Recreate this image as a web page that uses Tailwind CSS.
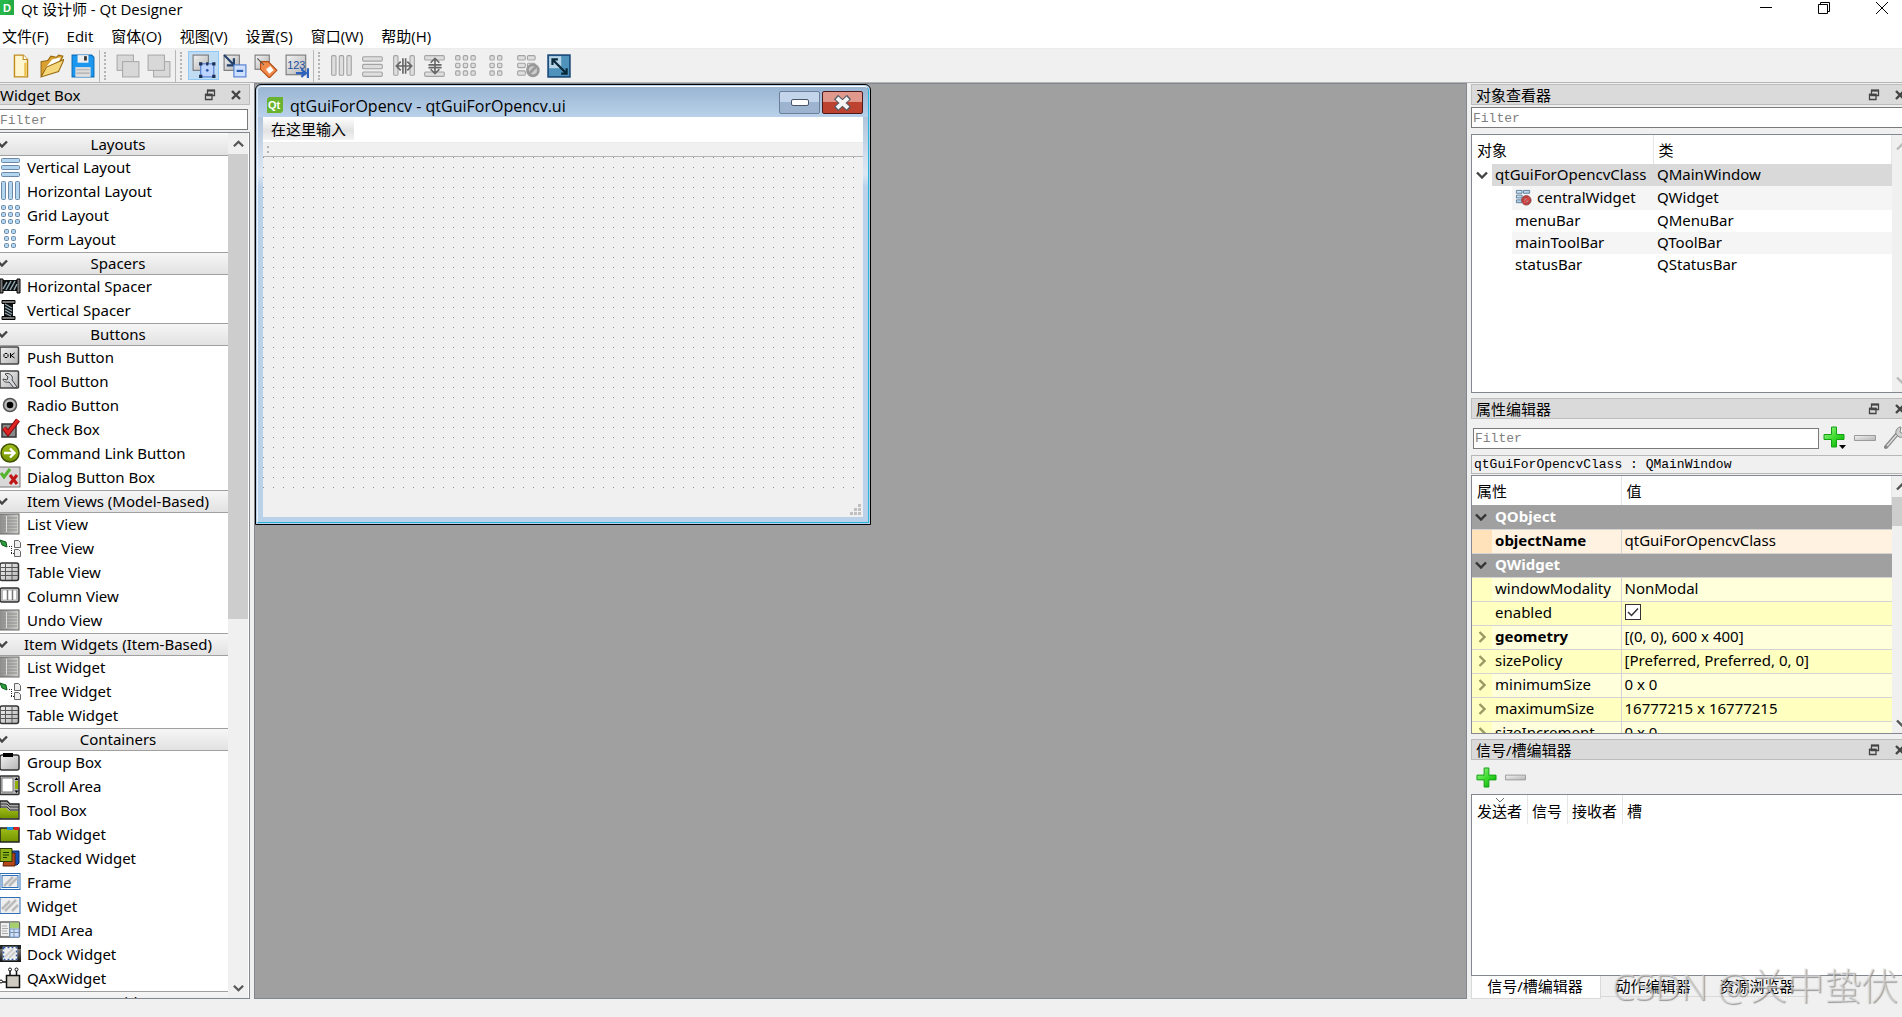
<!DOCTYPE html>
<html lang="zh">
<head>
<meta charset="utf-8">
<title>Qt 设计师 - Qt Designer</title>
<script src="https://cdn.jsdelivr.net/npm/@tailwindcss/browser@4"></script>
</head>
<body class="relative h-screen overflow-hidden flex flex-col bg-[#f0f0f0] text-black text-base leading-5 font-['Noto_Sans','Noto_Sans_CJK_SC',sans-serif]">

<svg class="absolute w-0 h-0">
  <defs>
    <linearGradient id="blue" x1="0" y1="0" x2="1" y2="1"><stop offset="0" stop-color="#d5ecfb"/><stop offset="1" stop-color="#8fb9dc"/></linearGradient>
    <linearGradient id="grey" x1="0" y1="0" x2="1" y2="1"><stop offset="0" stop-color="#f2f2f2"/><stop offset="1" stop-color="#b4b4b4"/></linearGradient>
    <linearGradient id="steel" x1="0" y1="0" x2="1" y2="0"><stop offset="0" stop-color="#8a8a8a"/><stop offset="1" stop-color="#cfcfcb"/></linearGradient>
    <linearGradient id="green" x1="0" y1="0" x2="1" y2="1"><stop offset="0" stop-color="#a6f59a"/><stop offset=".5" stop-color="#3fdc30"/><stop offset="1" stop-color="#00a800"/></linearGradient>
    <linearGradient id="olive" x1="0" y1="0" x2="0" y2="1"><stop offset="0" stop-color="#9fbd1a"/><stop offset="1" stop-color="#739300"/></linearGradient>
    <linearGradient id="dark" x1="0" y1="0" x2="0" y2="1"><stop offset="0" stop-color="#999"/><stop offset="1" stop-color="#111"/></linearGradient>
    <symbol id="chev" viewBox="0 0 12 8"><path d="M1 1.5l5 5 5-5" fill="none" stroke="currentColor" stroke-width="2.4"/></symbol>
    <symbol id="float" viewBox="0 0 12 12"><path d="M3.5 1.5h7v5h-7zM1.500 5.500h6.500v5h-6.500z" fill="#dadada" stroke="#444" stroke-width="1.300"/><path d="M3 1.500h8M1 5.700h7.500" stroke="#444" stroke-width="2"/></symbol>
    <symbol id="close" viewBox="0 0 12 12"><path d="M2 2l8 8M10 2l-8 8" stroke="#444" stroke-width="2.400"/></symbol>
    <symbol id="plus" viewBox="0 0 22 22"><path d="M8.500 1h5v7.500h7.500v5h-7.500v7.500h-5v-7.500h-7.500v-5h7.500z" fill="url(#green)" stroke="#12a112"/></symbol>
    <symbol id="minus" viewBox="0 0 22 22"><path d="M.5 8.500h21v5h-21z" fill="url(#grey)" stroke="#9a9a9a"/></symbol>
    <symbol id="nolayout" viewBox="0 0 18 18"><g fill="url(#blue)" stroke="#5f7d98"><path d="M1.500 1.500h6v3h-6zM9 1.500h6.500v3h-6.500zM1.500 6.500h6v3h-6zM1.500 11.500h6v3h-6z"/></g><circle cx="12" cy="12" r="5" fill="#c33a3a" stroke="#8e5050"/><circle cx="12" cy="12" r="2.500" fill="#a88" /><path d="M9 15l6-6" stroke="#d44" stroke-width="2"/></symbol>
  </defs>
</svg>

<header class="bg-white shrink-0 h-[49px] border-b border-[#ececec] font-['Open_Sans','Noto_Sans_CJK_SC',sans-serif] text-[15px]">
  <div class="flex items-start h-[26px] gap-[18px]">
    <h1 class="leading-[18px] grow flex gap-[7px]"><svg class="w-[14px] h-[15px]" viewBox="0 0 14 15"><path d="M0 0h14v15h-14z" fill="#28b84a"/><path d="M9 0h5v15h-9z" fill="#1f9d3f" opacity=".5"/><text x="3" y="12" font-size="11" font-weight="bold" fill="#fff" font-family="Liberation Sans">D</text></svg>Qt 设计师 - Qt Designer</h1>
    <button aria-label="Minimize" class="w-10 h-4 flex justify-center items-center"><svg class="w-3 h-3" viewBox="0 0 12 12"><path d="M0 5.500h12" stroke="#000"/></svg></button>
    <button aria-label="Restore" class="w-10 h-4 flex justify-center items-center"><svg class="w-3 h-3" viewBox="0 0 12 12"><path d="M.5 2.500h9v9h-9zM2.500 2.500v-2h9v9h-2" fill="none" stroke="#000"/></svg></button>
    <button aria-label="Close" class="w-10 h-4 flex justify-center items-center"><svg class="w-3 h-3" viewBox="0 0 12 12"><path d="M0 0l12 12M12 0l-12 12" stroke="#000"/></svg></button>
  </div>
  <nav class="flex gap-[18px] pl-0.5 leading-5">
    <a href="#">文件(F)</a><a href="#">Edit</a><a href="#">窗体(O)</a><a href="#">视图(V)</a><a href="#">设置(S)</a><a href="#">窗口(W)</a><a href="#">帮助(H)</a>
  </nav>
</header>

<div id="toolbar" class="shrink-0 h-[34px] flex items-center border-b border-[#b4b4b4] pl-[5px]"></div>

<main class="grow min-h-0 flex">

  <aside class="w-[250px] shrink-0 flex flex-col pt-px">
    <div class="h-[21px] shrink-0 flex items-center bg-[#dadada] border border-l-0 border-[#bcbcbc]">
      <h2 class="grow text-[15px]">Widget Box</h2>
      <button aria-label="Float" class="mr-[14px]"><svg class="w-3 h-3"><use href="#float"/></svg></button>
      <button aria-label="Close" class="mr-[7px]"><svg class="w-3 h-3"><use href="#close"/></svg></button>
    </div>
    <input aria-label="Filter widgets" placeholder="Filter" class="mt-1 mr-0.5 h-[21px] pt-0.5 shrink-0 border border-l-0 border-[#7a7a7a] bg-white text-[13px] font-['Liberation_Mono',monospace] placeholder:text-[#808080]">
    <div class="mt-0.5 grow min-h-0 flex border border-l-0 border-[#828790] bg-white">
      <div id="widgets" class="grow overflow-hidden"></div>
      <div class="w-5 shrink-0 bg-[#f0f0f0] flex flex-col items-center text-[#555] mr-px">
        <div class="h-[21px] shrink-0 flex items-center"><svg class="w-[11px] h-2 rotate-180"><use href="#chev"/></svg></div>
        <div class="w-full bg-[#cdcdcd] basis-[465px]"></div>
        <div class="grow"></div>
        <div class="h-[21px] shrink-0 flex items-center"><svg class="w-[11px] h-2"><use href="#chev"/></svg></div>
      </div>
    </div>
  </aside>

  <section class="grow ml-1 border border-[#828790] bg-[#a0a0a0] overflow-hidden">
    <div class="w-[616px] h-[441px] rounded-t-md border border-black bg-[#bad1ea] p-px">
      <div class="h-full flex flex-col rounded-t-[5px] border border-t-white border-l-white/70 border-r-[#2bb4d6] border-b-[#2bb4d6] px-[5px] pb-[5px] bg-linear-to-b from-[#9ab3d0] from-0% via-[#dde8f4] via-20% to-[#bad1ea] to-23%">
        <div class="-mx-[5px] px-[5px] h-[30px] shrink-0 flex bg-linear-to-b from-[#9ab5d2] to-[#b9d1ea] rounded-t">
          <svg class="w-4 h-4 mt-[10px] ml-1 mr-[7px]" viewBox="0 0 16 16"><path d="M2 0h14v14l-2 2h-14v-14z" fill="#6ab32e"/><text x="1" y="12" font-size="11" font-weight="bold" fill="#fff" font-family="Liberation Sans">Qt</text></svg>
          <h2 class="grow mt-[9px] font-['Open_Sans',sans-serif] text-base leading-5">qtGuiForOpencv - qtGuiForOpencv.ui</h2>
          <button aria-label="Minimize form" class="mt-1 w-[41px] h-[23px] mr-0.5 border border-[#6b7f9b] rounded-xs bg-linear-to-b from-[#c3d5ea] from-50% to-[#9db4d0] to-50% flex justify-center items-center"><span class="w-[18px] h-[7px] border border-[#4a5568] rounded-xs bg-white"></span></button>
          <button aria-label="Close form" class="mt-1 w-[41px] h-[23px] border border-[#4d1a1a] rounded-xs bg-linear-to-b from-[#e0998c] from-45% to-[#bd4330] to-50% flex justify-center items-center"><svg class="w-[19px] h-4" viewBox="0 0 19 16"><path d="M3 2l13 12M16 2l-13 12" stroke="#555a66" stroke-width="6"/><path d="M4 3l11 10M15 3l-11 10" stroke="#f6f6f6" stroke-width="4"/></svg></button>
        </div>
        <div class="h-[26px] shrink-0 bg-white border-b border-[#ececec] flex items-start"><button class="h-[23px] px-2 text-[15px] bg-linear-to-b from-white via-[#e2e2e2] via-60% to-[#f4f4f4]">在这里输入</button></div>
        <div class="h-[14px] shrink-0 bg-[#f0f0f0] border-b border-[#b4b4b4] flex items-center pl-1"><span class="w-0.5 h-[7px] border-y-2 border-[#b4b4b4]"></span></div>
        <div class="h-[332px] shrink-0 bg-[#f0f0f0] flex pr-[6px]"><div id="dots" class="grow"></div></div>
        <div class="grow bg-[#f0f0f0] flex justify-end items-end p-0.5"><svg class="w-[11px] h-[11px]" viewBox="0 0 11 11"><path d="M8 0h3v3h-3zM4 4h3v3h-3zM8 4h3v3h-3zM0 8h3v3h-3zM4 8h3v3h-3zM8 8h3v3h-3z" fill="#c0c0c0"/></svg></div>
      </div>
    </div>
  </section>

  <aside class="ml-1 w-[431px] shrink-0 overflow-hidden flex flex-col pt-px">
    <div class="grow w-[441px] flex flex-col gap-[5px] text-[15px]">

      <section class="flex-[309] min-h-0 flex flex-col">
        <div class="h-[21px] shrink-0 flex items-center bg-[#dadada] border border-[#bcbcbc] pl-1">
          <h2 class="grow">对象查看器</h2>
          <button aria-label="Float" class="mr-[14px]"><svg class="w-3 h-3"><use href="#float"/></svg></button>
          <button aria-label="Close" class="mr-[5px]"><svg class="w-3 h-3"><use href="#close"/></svg></button>
        </div>
        <input aria-label="Filter objects" placeholder="Filter" class="mt-0.5 h-[21px] pt-0.5 shrink-0 px-px border border-[#7a7a7a] bg-white text-[13px] font-['Liberation_Mono',monospace] placeholder:text-[#808080]">
        <div class="mt-[6px] grow min-h-0 flex border border-[#828790] bg-white">
          <div class="grow">
            <table class="w-full table-fixed border-collapse text-left">
              <colgroup><col class="w-5"><col class="w-[161px]"><col></colgroup>
              <thead><tr class="h-[29px]"><th colspan="2" class="font-normal pl-[5px] border-r border-[#e5e5e5]">对象</th><th class="font-normal pl-[5px] border-r border-[#e5e5e5]">类</th></tr></thead>
              <tbody>
                <tr class="h-[22px]"><td class="pl-1"><svg class="w-3 h-2 text-[#444]"><use href="#chev"/></svg></td><td class="bg-[#d9d9d9] pl-[3px] pb-0.5">qtGuiForOpencvClass</td><td class="bg-[#d9d9d9] pl-1 pb-0.5">QMainWindow</td></tr>
                <tr class="h-6"><td></td><td class="pl-5"><span class="flex h-6 items-center bg-[#f5f5f5] pl-[3px] pb-0.5"><svg class="w-[17px] h-[17px] mr-[5px]"><use href="#nolayout"/></svg>centralWidget</span></td><td class="bg-[#f5f5f5] pl-1 pb-0.5">QWidget</td></tr>
                <tr class="h-[22px]"><td></td><td class="pl-[23px] pb-0.5">menuBar</td><td class="pl-1 pb-0.5">QMenuBar</td></tr>
                <tr class="h-[22px]"><td></td><td class="pl-5"><span class="flex h-[22px] items-center bg-[#f5f5f5] pl-[3px] pb-0.5">mainToolBar</span></td><td class="bg-[#f5f5f5] pl-1 pb-0.5">QToolBar</td></tr>
                <tr class="h-[22px]"><td></td><td class="pl-[23px] pb-0.5">statusBar</td><td class="pl-1 pb-0.5">QStatusBar</td></tr>
              </tbody>
            </table>
          </div>
          <div class="w-[19px] shrink-0 bg-[#f0f0f0] flex flex-col justify-between items-center py-2 text-[#bbb]"><svg class="w-3 h-2 rotate-180"><use href="#chev"/></svg><svg class="w-3 h-2"><use href="#chev"/></svg></div>
        </div>
      </section>

      <section class="flex-[336] min-h-0 flex flex-col">
        <div class="h-[21px] shrink-0 flex items-center bg-[#dadada] border border-[#bcbcbc] pl-1">
          <h2 class="grow">属性编辑器</h2>
          <button aria-label="Float" class="mr-[14px]"><svg class="w-3 h-3"><use href="#float"/></svg></button>
          <button aria-label="Close" class="mr-[5px]"><svg class="w-3 h-3"><use href="#close"/></svg></button>
        </div>
        <div class="h-9 shrink-0 flex items-center pl-0.5 pt-0.5">
          <input aria-label="Filter properties" placeholder="Filter" class="w-[346px] h-[21px] px-px border border-[#7a7a7a] bg-white text-[13px] font-['Liberation_Mono',monospace] placeholder:text-[#808080]">
          <button aria-label="Add property" class="ml-1 flex items-end"><svg class="w-6 h-6" viewBox="0 0 24 24"><use href="#plus" width="22" height="22"/><path d="M16 19h7l-3.500 4z" fill="#000"/></svg></button>
          <button aria-label="Remove property" class="ml-[7px]"><svg class="w-[22px] h-[22px]"><use href="#minus"/></svg></button>
          <button aria-label="Configure" class="ml-2"><svg class="w-6 h-6" viewBox="0 0 24 24"><path d="M2 21l12-14" stroke="#888" stroke-width="4" stroke-linecap="round"/><path d="M3 20l12-14" stroke="#ddd" stroke-width="1.500"/><path d="M12 8c-1-4 2-7 5-7l-1 5 3 2 4-2c0 4-5 6-8 5z" fill="#d0d0d0" stroke="#888"/></svg></button>
        </div>
        <div class="h-[19px] shrink-0 border border-[#b8b8b8] pl-0.5 leading-[18px] text-[13px] font-['Liberation_Mono',monospace]">qtGuiForOpencvClass : QMainWindow</div>
        <div class="mt-px grow min-h-0 flex border border-[#828790] bg-white">
          <div class="grow overflow-hidden">
            <table class="w-full table-fixed border-collapse text-left">
              <colgroup><col class="w-5"><col class="w-[129px]"><col></colgroup>
              <thead><tr class="h-[29px]"><th colspan="2" class="font-normal pl-[5px] border-r border-[#e5e5e5]">属性</th><th class="font-normal pl-[5px] border-r border-[#e5e5e5]">值</th></tr></thead>
              <tbody id="props"></tbody>
            </table>
          </div>
          <div class="w-[19px] shrink-0 bg-[#f0f0f0] flex flex-col items-center text-[#555]">
            <div class="h-[21px] flex items-center shrink-0"><svg class="w-3 h-2 rotate-180"><use href="#chev"/></svg></div>
            <div class="w-full h-[29px] bg-[#cdcdcd] shrink-0"></div><div class="grow"></div>
            <div class="h-[21px] flex items-center shrink-0"><svg class="w-3 h-2"><use href="#chev"/></svg></div>
          </div>
        </div>
      </section>

      <section class="flex-[260] min-h-0 flex flex-col">
        <div class="h-[21px] shrink-0 flex items-center bg-[#dadada] border border-[#bcbcbc] pl-1">
          <h2 class="grow">信号/槽编辑器</h2>
          <button aria-label="Float" class="mr-[14px]"><svg class="w-3 h-3"><use href="#float"/></svg></button>
          <button aria-label="Close" class="mr-[5px]"><svg class="w-3 h-3"><use href="#close"/></svg></button>
        </div>
        <div class="h-[34px] shrink-0 flex items-center gap-2 pl-[5px]">
          <button aria-label="Add connection"><svg class="w-[21px] h-[21px]"><use href="#plus"/></svg></button>
          <button aria-label="Remove connection"><svg class="w-[21px] h-[21px]"><use href="#minus"/></svg></button>
        </div>
        <div class="grow min-h-0 border border-[#828790] bg-white">
          <table class="text-left border-collapse"><thead><tr class="h-[29px]">
            <th class="relative font-normal px-[5px] pt-0.5 border-r border-[#e5e5e5] whitespace-nowrap">发送者<svg class="absolute left-6 top-[3px] w-2 h-1" viewBox="0 0 8 4"><path d="M0 0l4 4 4-4" fill="none" stroke="#666"/></svg></th>
            <th class="font-normal pl-1 pr-[5px] pt-0.5 border-r border-[#e5e5e5] whitespace-nowrap">信号</th>
            <th class="font-normal pl-1 pr-[5px] pt-0.5 border-r border-[#e5e5e5] whitespace-nowrap">接收者</th>
            <th class="font-normal px-1 pt-0.5">槽</th></tr></thead></table>
        </div>
        <div class="h-[23px] shrink-0 flex items-start">
          <button class="h-[23px] w-[130px] pb-1 pr-0.5 bg-white border border-t-0 border-[#d9d9d9]">信号/槽编辑器</button>
          <button class="h-[21px] w-[104px] pb-0.5 border-b border-[#d9d9d9]">动作编辑器</button>
          <button class="h-[21px] w-[104px] pb-0.5 border-b border-[#d9d9d9]">资源浏览器</button>
        </div>
      </section>
    </div>
  </aside>
</main>
<footer class="h-[18px] shrink-0"></footer>

<div class="absolute right-1 bottom-1 text-[37px] leading-[54px] font-light font-['Open_Sans','Noto_Sans_CJK_SC',sans-serif] text-[#e4e4e4]/60 [text-shadow:1px_1px_1px_#777b] pointer-events-none whitespace-nowrap">CSDN @关中蛰伏</div>

<script>
const svg = (body, w = 22, h = 22) => `<svg class="shrink-0" width="${w}" height="${h}" viewBox="0 0 22 22">${body}</svg>`;
const cells = (xs, ys, w, h, fill, stroke) => xs.map(x => ys.map(y => `<rect x="${x}" y="${y}" width="${w}" height="${h}" rx="1" fill="${fill}" stroke="${stroke}"/>`).join('')).join('');
const layouts = (fill, stroke) => ({
  v: cells([1.5], [2.5, 9.5, 16.5], 18, 4, fill, stroke),
  h: cells([1.5, 8.5, 15.5], [1.5], 4, 18, fill, stroke),
  g: cells([1.5, 8.5, 15.5], [1.5, 8.5, 15.5], 4, 4, fill, stroke),
  f: cells([4.5, 11.5], [1.5, 8.5, 15.5], 4, 4, fill, stroke)
});
const B = layouts('#b3d6f0', '#6c88a6'), G = layouts('#dedede', '#a3a3a3');

const list = '<rect x="-1" y="1" width="20" height="20" fill="url(#steel)" stroke="#666"/><path d="M3 5h14M3 8h14M3 11h14M3 14h14M3 17h14" stroke="#8d8d8d"/><path d="M6.500 3v16" stroke="#ddd"/>';
const tree = '<path d="M0 3l6 2 1 5-5-2z" fill="#2c9c3c" stroke="#145a20"/><path d="M9 9.500h4M11.500 9v8M11 16.500h4" stroke="#222" stroke-dasharray="1 1"/><path d="M14.500 3.500h4l2 2v5h-6zM14.500 12.500h4l2 2v5h-6z" fill="#eee" stroke="#666"/>';
const table = '<rect x="0" y="2" width="18.500" height="17.500" rx="2" fill="url(#grey)" stroke="#333" stroke-width="1.500"/><path d="M1 6.500h17M1 10.500h17M1 14.500h17M5.500 3v16M12 3v16" stroke="#555"/>';
const icons = {
  hs: '<path d="M3 5h14v11h-14z" fill="#111"/><path d="M0 4h3v14h-3zM17 4h3v14h-3z" fill="#777" stroke="#000"/><path d="M3 14l4-7M6 15l5-9M10 15l5-9M14 15l3-6" stroke="#8fa9b5" stroke-width="1.500"/>',
  vs: '<path d="M4 4h9v14h-9z" fill="#111"/><path d="M2 1.500h13v3h-13zM2 17.500h13v3h-13z" fill="#777" stroke="#000"/><path d="M5 5l7 4M5 8l7 4M5 11l7 4M5 14l6 3" stroke="#8fa9b5" stroke-width="1.300"/>',
  push: '<rect x="0" y="1" width="18.500" height="17" rx="1" fill="url(#grey)" stroke="#444" stroke-width="1.500"/><path d="M5 7.500h2l1 1v2l-1 1h-2l-1-1v-2zM10.500 7v5M14.500 7l-3.500 2.500 3.500 2.500" fill="none" stroke="#000"/>',
  tool: '<rect x="0" y="1" width="18.500" height="17" rx="1" fill="url(#grey)" stroke="#444" stroke-width="1.500"/><path d="M5 4c4-2 9 2 7 6l5 7-3 1-5-6c-4 1-6-1-6-3l4 1 1-3z" fill="#d4d8dc" stroke="#444"/>',
  radio: '<circle cx="10" cy="11" r="6.500" fill="#bbb" stroke="#555" stroke-width="1.500"/><circle cx="10" cy="11" r="3.300" fill="#000"/>',
  check: '<rect x="2" y="6" width="14" height="13" fill="#888" stroke="#333" stroke-width="1.500"/><path d="M4 10l4 5 10-13" fill="none" stroke="#7d0d0d" stroke-width="5"/><path d="M4 10l4 5 10-13" fill="none" stroke="#e02424" stroke-width="3"/>',
  cmd: '<circle cx="10" cy="11" r="9" fill="url(#olive)" stroke="#3f5200" stroke-width="1.500"/><path d="M4 11h10M10 6.500l4.500 4.500-4.500 4.500" fill="none" stroke="#fff" stroke-width="2.400"/>',
  dlg: '<rect x="-1" y="1" width="21" height="20" fill="#d9d9d9" stroke="#777"/><path d="M1 7l3 4 6-8" fill="none" stroke="#55b32e" stroke-width="3"/><path d="M10 9l7 9M17 9l-7 9" stroke="#c01616" stroke-width="3"/>',
  col: '<rect x="0" y="3" width="19" height="14" rx="2" fill="#bbb" stroke="#333" stroke-width="1.500"/><path d="M3 5.500h13v9h-13z" fill="#fff"/><path d="M7.500 5v10M12.500 5v10" stroke="#777" stroke-width="1.500"/>',
  group: '<rect x="0" y="4" width="19" height="15" rx="2" fill="url(#grey)" stroke="#333" stroke-width="1.500"/><path d="M3 2h10v4h-10z" fill="#000"/>',
  scroll: '<rect x="0" y="1" width="19" height="18.500" rx="1" fill="#bbb" stroke="#333" stroke-width="1.500"/><path d="M2 3h11v14h-11z" fill="#fff" stroke="#777"/><path d="M15 6h3v8h-3z" fill="#8fb300"/><path d="M14.500 5h4l-2-2.500zM14.500 15.500h4l-2 2.500z" fill="#000"/>',
  tbox: '<path d="M0 2h7l3 3h9v15h-19z" fill="#aaa" stroke="#222" stroke-width="1.300"/><path d="M0 5h7l3 3h9M0 8h7l3 3h9" fill="none" stroke="#333"/><path d="M0 9h6l3 3h9v7h-18z" fill="url(#olive)"/>',
  tab: '<path d="M0 5h19v14h-19z" fill="url(#olive)" stroke="#222" stroke-width="1.500"/><path d="M7 4h6v3h-6z" fill="#1d90e0"/><path d="M14 4h5v3h-5z" fill="#d22"/>',
  stack: '<path d="M11 4h8v12l-2 2h-6z" fill="#1450b4" stroke="#0b2a60"/><path d="M5 6h10v13h-12z" fill="#b5471b" stroke="#5d1f08"/><path d="M0 1.500h12v13h-12z" fill="#8fb016" stroke="#2c3a00"/><path d="M3 5.500h6M3 8h6M3 10.500h4" stroke="#143c00"/>',
  frame: '<rect x="0" y="2.500" width="20" height="16" fill="#fff" stroke="#2f6fb8"/><rect x="2" y="4.500" width="16" height="12" fill="#eee" stroke="#2f6fb8"/><path d="M4 15l9-9M9 15l8-8" stroke="#bbb" stroke-width="2.500"/>',
  widget: '<rect x="0" y="2.500" width="20" height="16" fill="#eee" stroke="#2f6fb8"/><path d="M2 14l8-8M5 16l11-11M12 16l6-6" stroke="#bbb" stroke-width="2.500"/>',
  mdi: '<rect x="0" y="3" width="19.500" height="15" rx="1" fill="#eee" stroke="#666" stroke-width="1.300"/><path d="M10 3.500h9v6h-9z" fill="#a8cf6f"/><path d="M10 10h9v8h-9z" fill="#cfe0ff" stroke="#7a9fd4"/><path d="M2 7h5M2 9.500h6M2 12h5M2 14.500h6" stroke="#aaa"/><path d="M9.500 3v15M10 13.500h9M14 10v8" stroke="#7a8fa4"/>',
  dock: '<path d="M0 2h21v17h-21z" fill="url(#dark)"/><path d="M0 2h21v4h-21z" fill="#222"/><rect x="3.500" y="4.500" width="13" height="12" fill="#eee" stroke="#fff" stroke-width="1.500"/><rect x="3.500" y="4.500" width="13" height="12" fill="none" stroke="#2f5fa8" stroke-width="1.500" stroke-dasharray="2 2"/><path d="M5 14l8-8M9 15l6-6" stroke="#ccc" stroke-width="2"/>',
  qax: '<path d="M6.500 8.500h13v12h-13z" fill="#cfcbc2" stroke="#111" stroke-width="1.500"/><path d="M10 8v-4M16.500 8v-4M6 15h-4" stroke="#111" stroke-width="1.500"/><circle cx="10" cy="2.500" r="1.500" fill="#fff" stroke="#111"/><circle cx="16.500" cy="2.500" r="1.500" fill="#fff" stroke="#111"/><circle cx="1" cy="14.500" r="1.500" fill="#fff" stroke="#111"/>'
};
const groups = [
  ['Layouts', [['Vertical Layout', B.v], ['Horizontal Layout', B.h], ['Grid Layout', B.g], ['Form Layout', B.f]]],
  ['Spacers', [['Horizontal Spacer', icons.hs], ['Vertical Spacer', icons.vs]]],
  ['Buttons', [['Push Button', icons.push], ['Tool Button', icons.tool], ['Radio Button', icons.radio], ['Check Box', icons.check], ['Command Link Button', icons.cmd], ['Dialog Button Box', icons.dlg]]],
  ['Item Views (Model-Based)', [['List View', list], ['Tree View', tree], ['Table View', table], ['Column View', icons.col], ['Undo View', list]]],
  ['Item Widgets (Item-Based)', [['List Widget', list], ['Tree Widget', tree], ['Table Widget', table]]],
  ['Containers', [['Group Box', icons.group], ['Scroll Area', icons.scroll], ['Tool Box', icons.tbox], ['Tab Widget', icons.tab], ['Stacked Widget', icons.stack], ['Frame', icons.frame], ['Widget', icons.widget], ['MDI Area', icons.mdi], ['Dock Widget', icons.dock], ['QAxWidget', icons.qax]]],
  ['Input Widgets', []]
];
document.getElementById('widgets').innerHTML = groups.map(([name, rows]) => `
  <h3 class="relative h-[23px] pl-2 pb-0.5 flex items-center justify-center text-[15px] border-y border-[#a0a0a0] first:border-t-white bg-linear-to-b from-[#f6f6f6] to-[#e2e2e2]"><svg class="absolute -left-1 top-1.5 w-3 h-2 text-[#444]"><use href="#chev"/></svg>${name}</h3>
  <ul>${rows.map(([t, i]) => `<li class="h-6 pb-0.5 flex items-center gap-[5px] text-[15px]">${svg(i)}${t}</li>`).join('')}</ul>`).join('');

const sq = (x, y, s, f = 'url(#grey)') => `<rect x="${x}" y="${y}" width="${s}" height="${s}" fill="${f}" stroke="#777"/>`;
const gsq = (x, y) => `<rect x="${x}" y="${y}" width="15" height="14" fill="#d8d8d8" stroke="#aaa"/>`;
const tools = [
  ['New', '<path d="M5 1h8l4 4v16h-12z" fill="#fff6cf" stroke="#c08a1c" stroke-width="1.300"/><path d="M13 1v4h4" fill="#fff" stroke="#c08a1c"/><path d="M15 8v12" stroke="#eac04a" stroke-width="2"/>'],
  ['Open', '<path d="M1 20v-13l6-1 3-4 5 1 2-2 4 1-3 6z" fill="#d9a030" stroke="#9a6a12"/><path d="M4 14l7-9 8-2-2 5z" fill="#fff"/><path d="M1 21l5-9 16-7-5 11z" fill="#f5d77c" stroke="#9a6a12"/>'],
  ['Save', '<path d="M1 1h18l2 2v18h-20z" fill="#1c97f0" stroke="#0c6dba"/><path d="M6 1h10v7h-10z" fill="#eee"/><path d="M12 2h2.500v4h-2.500z" fill="#333"/><path d="M4 12h14v9h-14z" fill="#ddd"/><path d="M5 14.500h12M5 17.500h12" stroke="#aaa"/>'],
  '|',
  ['Send to back', gsq(1, 1) + gsq(6, 7)], ['Bring to front', gsq(6, 7) + gsq(1, 1)],
  '|',
  ['Edit widgets', sq(1, 1, 14) + '<rect x="8" y="9" width="12" height="12" fill="#bcd4ff" stroke="#4a7ad0"/><path d="M6.500 7.500h3v3h-3zM18.500 7.500h3v3h-3zM6.500 19h3v3h-3zM18.500 19h3v3h-3zM13 7.500h2v3h-2z" fill="#1c2f55"/><circle cx="14" cy="15" r="1.200" fill="#2255aa"/>', 1],
  ['Edit signals', sq(1, 1, 14) + '<path d="M1 1l9 9M10 4v6.500h-6.500" fill="none" stroke="#24406c" stroke-width="2"/><rect x="10" y="10" width="11" height="11" fill="#cfe0ff" stroke="#4a7ad0"/><path d="M12.500 15.500h6" stroke="#2b5db0" stroke-width="2"/>'],
  ['Edit buddies', sq(1, 1, 13) + '<path d="M6 7h7l8 8-7 7-8-8z" fill="#f08a4a" stroke="#b24a10"/><path d="M11 14l4-3 3 4-4 3z" fill="#fff"/><path d="M3 4l6 6" stroke="#555"/>'],
  ['Edit tab order', sq(1, 1, 18) + '<text x="2" y="14" font-size="10" fill="#1d4f9e" font-family="Liberation Sans">123</text><path d="M10 17.500h8M15 14l4 3.500-4 3.500M21 13v9" fill="none" stroke="#2b62c0" stroke-width="2"/>'],
  '|',
  ['Lay out horizontally', G.h], ['Lay out vertically', G.v],
  ['Splitter horizontally', cells([1.5, 16.5], [1.5], 4, 18, '#dedede', '#a3a3a3') + '<path d="M4 11h14M8 7l-4 4 4 4M14 7l4 4-4 4M10 4v14M12.500 4v14" fill="none" stroke="#666" stroke-width="1.500"/>'],
  ['Splitter vertically', cells([1.5], [1.5, 16.5], 18, 4, '#dedede', '#a3a3a3') + '<path d="M11 4v14M7 8l4-4 4 4M7 14l4 4 4-4M5 10h12M5 12.500h12" fill="none" stroke="#666" stroke-width="1.500"/>'],
  ['Lay out in a grid', G.g], ['Lay out in a form', G.f],
  ['Break layout', cells([1.5, 10.5], [1.5, 8.5], 7, 4, '#dedede', '#a3a3a3') + cells([1.5], [15.5], 7, 4, '#dedede', '#a3a3a3') + '<circle cx="15.500" cy="15" r="5" fill="#ccc" stroke="#999" stroke-width="2.500"/><path d="M12 18l7-7" stroke="#999" stroke-width="2.500"/>'],
  ['Adjust size', '<rect x="1" y="1" width="20" height="20" fill="#4f93bd" stroke="#1b4a78" stroke-width="1.500"/><rect x="2" y="2" width="11" height="11" fill="#b9d6e8"/><path d="M5 5l13 13M5 10v-5h5M18 13v5h-5" fill="none" stroke="#0a2a3c" stroke-width="2"/>']
];
document.getElementById('toolbar').innerHTML = tools.map(t => t === '|'
  ? '<span class="ml-px mr-1 w-px h-8 bg-[#b8b8b8]"></span><span class="w-0.5 mr-1.5 h-7 border-l-2 border-dotted border-[#b4b4b4]"></span>'
  : `<button aria-label="${t[0]}" class="${t[2] ? 'w-[31px] h-[29px] flex items-center justify-center bg-[#c0dcf3] border border-[#90c8f6]' : 'w-[31px] h-[29px] flex items-center justify-center'}">${svg(t[1], 24, 24)}</button>`).join('');

const chevRight = '<svg class="w-3 h-2 ml-1 -rotate-90 text-[#999966]"><use href="#chev"/></svg>';
const chevDown = '<svg class="w-3 h-2 ml-[3px] text-[#333]"><use href="#chev"/></svg>';
const light = 'bg-[#ffffdc]', deep = 'bg-[#ffffbf]';
const props = [
  ['objectName', 'qtGuiForOpencvClass', 'bg-[#fff2e0]', 'bg-[#ffe2b9]', '', 1],
  null,
  ['windowModality', 'NonModal', light, deep, ''],
  ['enabled', '<span class="relative block w-4 h-4"><input type="checkbox" checked aria-label="enabled" class="block w-4 h-4 appearance-none bg-white border border-[#333]"><svg class="absolute inset-0 w-4 h-4 pointer-events-none" viewBox="0 0 16 16"><path d="M3 8l3.500 3.500 6.500-7" fill="none" stroke="#333" stroke-width="1.500"/></svg></span>', deep, deep, ''],
  ['geometry', '[(0, 0), 600 x 400]', light, deep, chevRight, 1],
  ['sizePolicy', '[Preferred, Preferred, 0, 0]', deep, deep, chevRight],
  ['minimumSize', '0 x 0', light, deep, chevRight],
  ['maximumSize', '16777215 x 16777215', deep, deep, chevRight],
  ['sizeIncrement', '0 x 0', light, deep, chevRight]
];
const section = n => `<tr class="h-6 bg-[#a0a0a0] border-b border-[#d4d4d4] text-white"><td>${chevDown}</td><th colspan="2" class="pl-[3px] pb-0.5 font-bold">${n}</th></tr>`;
document.getElementById('props').innerHTML = section('QObject') + props.map(p => p === null ? section('QWidget')
  : `<tr class="h-6 border-b border-[#d4d4d4] ${p[2]}"><td class="${p[3]}">${p[4]}</td><td class="${p[5] ? 'pl-[3px] pb-0.5 border-r border-[#d4d4d4] font-bold' : 'pl-[3px] pb-0.5 border-r border-[#d4d4d4]'}">${p[0]}</td><td class="pl-[3px] pb-0.5">${p[1]}</td></tr>`).join('');

document.getElementById('dots').innerHTML = '<svg width="100%" height="100%"><defs><pattern id="dot" width="10" height="10" patternUnits="userSpaceOnUse"><rect width="1" height="1" fill="#8a8a8a"/></pattern></defs><rect width="100%" height="100%" fill="url(#dot)"/></svg>';
</script>
</body>
</html>
